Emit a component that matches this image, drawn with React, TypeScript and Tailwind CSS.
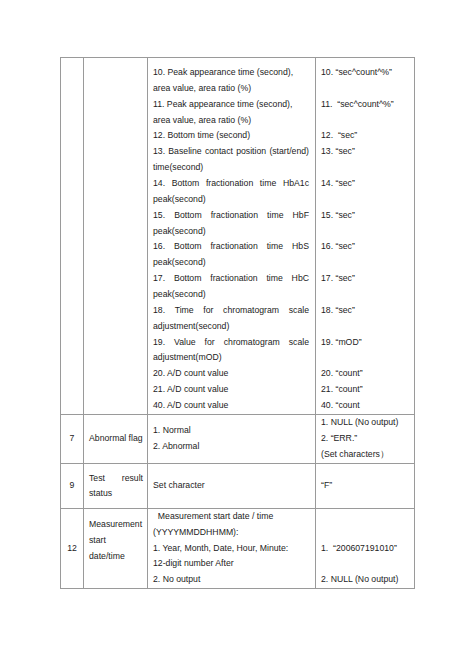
import React from "react";

const LH = "h-[15.86px] leading-[15.86px]";

function L({ t = "", j = false }: { t?: string; j?: boolean }) {
  if (j) {
    const words = t.split(" ");
    return (
      <div className={`${LH} flex justify-between whitespace-nowrap`}>
        {words.map((w, i) => (
          <span key={i}>{w}</span>
        ))}
      </div>
    );
  }
  return <div className={`${LH} whitespace-pre`}>{t === "" ? "\u00a0" : t}</div>;
}

const col3Row1: [string, boolean][] = [
  ["10. Peak appearance time (second),", false],
  ["area value, area ratio (%)", false],
  ["11. Peak appearance time (second),", false],
  ["area value, area ratio (%)", false],
  ["12. Bottom time (second)", false],
  ["13. Baseline contact position (start/end)", true],
  ["time(second)", false],
  ["14. Bottom fractionation time HbA1c", true],
  ["peak(second)", false],
  ["15. Bottom fractionation time HbF", true],
  ["peak(second)", false],
  ["16. Bottom fractionation time HbS", true],
  ["peak(second)", false],
  ["17. Bottom fractionation time HbC", true],
  ["peak(second)", false],
  ["18. Time for chromatogram scale", true],
  ["adjustment(second)", false],
  ["19. Value for chromatogram scale", true],
  ["adjustment(mOD)", false],
  ["20. A/D count value", false],
  ["21. A/D count value", false],
  ["40. A/D count value", false],
];

const col4Row1: string[] = [
  "10. \u201csec^count^%\u201d",
  "",
  "11.  \u201csec^count^%\u201d",
  "",
  "12.  \u201csec\u201d",
  "13. \u201csec\u201d",
  "",
  "14. \u201csec\u201d",
  "",
  "15. \u201csec\u201d",
  "",
  "16. \u201csec\u201d",
  "",
  "17. \u201csec\u201d",
  "",
  "18. \u201csec\u201d",
  "",
  "19. \u201cmOD\u201d",
  "",
  "20. \u201ccount\u201d",
  "21. \u201ccount\u201d",
  "40. \u201ccount",
];

export default function App() {
  const cell = "border border-[#9a9a9a] p-0";
  return (
    <div
      className="min-h-[670px] w-[474px] bg-white pt-[57px] pl-[60px] text-[8.7px] text-[#1c1c1c]"
      style={{ fontFamily: '"Liberation Sans", Arial, sans-serif' }}
    >
      <table className="table-fixed border-collapse w-[354px]">
        <colgroup>
          <col className="w-[23px]" />
          <col className="w-[64px]" />
          <col className="w-[168px]" />
          <col className="w-[99px]" />
        </colgroup>
        <tbody>
          <tr className="h-[356px]">
            <td className={cell}></td>
            <td className={cell}></td>
            <td className={`${cell} align-top pt-[7px] pl-[5px] pr-[6px]`}>
              {col3Row1.map(([t, j], i) => (
                <L key={i} t={t} j={j} />
              ))}
            </td>
            <td className={`${cell} align-top pt-[7px] pl-[5px]`}>
              {col4Row1.map((t, i) => (
                <L key={i} t={t} />
              ))}
            </td>
          </tr>
          <tr className="h-[49px]">
            <td className={`${cell} align-middle text-center`}>7</td>
            <td className={`${cell} align-middle pl-[5px] pr-[4px]`}>
              <L t="Abnormal flag" />
            </td>
            <td className={`${cell} align-middle pl-[5px] pr-[6px]`}>
              <L t="1. Normal" />
              <L t="2. Abnormal" />
            </td>
            <td className={`${cell} align-middle pl-[5px]`}>
              <L t="1. NULL (No output)" />
              <L t={"2. \u201cERR.\u201d"} />
              <L t={"(Set characters\uff09"} />
            </td>
          </tr>
          <tr className="h-[45px]">
            <td className={`${cell} align-middle text-center`}>9</td>
            <td className={`${cell} align-middle pl-[5px] pr-[4px]`}>
              <div className="h-[15px] leading-[15px] flex justify-between">
                <span>Test</span>
                <span>result</span>
              </div>
              <div className="h-[15px] leading-[15px]">status</div>
            </td>
            <td className={`${cell} align-middle pl-[5px] pr-[6px]`}>
              <L t="Set character" />
            </td>
            <td className={`${cell} align-middle pl-[5px]`}>
              <L t={"\u201cF\u201d"} />
            </td>
          </tr>
          <tr className="h-[80px]">
            <td className={`${cell} align-middle text-center`}>12</td>
            <td className={`${cell} align-middle pl-[5px] pr-[4px]`}>
              <L t="Measurement" />
              <L t="start" />
              <L t="date/time" />
              <L t="" />
            </td>
            <td className={`${cell} align-middle pl-[5px] pr-[6px]`}>
              <L t="  Measurement start date / time" />
              <L t="(YYYYMMDDHHMM):" />
              <L t="1. Year, Month, Date, Hour, Minute:" />
              <L t="12-digit number After" />
              <L t="2. No output" />
            </td>
            <td className={`${cell} align-middle pl-[5px]`}>
              <L t="" />
              <L t="" />
              <L t={"1.  \u201c200607191010\u201d"} />
              <L t="" />
              <L t="2. NULL (No output)" />
            </td>
          </tr>
        </tbody>
      </table>
    </div>
  );
}
